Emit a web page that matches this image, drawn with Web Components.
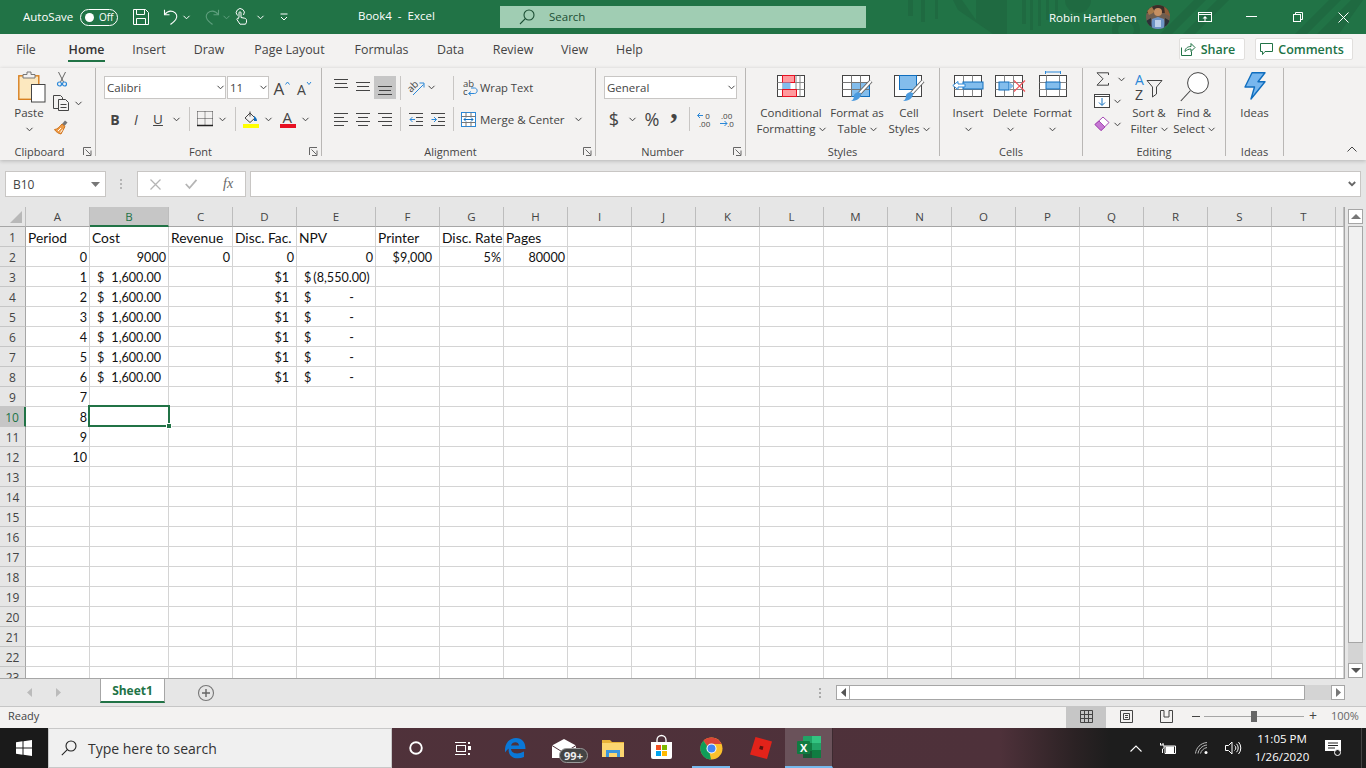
<!DOCTYPE html>
<html lang="en"><head><meta charset="utf-8"><title>Book4 - Excel</title>
<style>
html,body{margin:0;padding:0;width:1366px;height:768px;overflow:hidden;background:#e6e6e6}
body{font-family:"Open Sans","Liberation Sans",sans-serif;font-size:12px;color:#444;display:flex;flex-direction:column}
</style></head><body>
<xl-titlebar></xl-titlebar>
<xl-tabs></xl-tabs>
<xl-ribbon></xl-ribbon>
<xl-formula></xl-formula>
<xl-sheet></xl-sheet>
<xl-sheetbar></xl-sheetbar>
<xl-status></xl-status>
<xl-taskbar></xl-taskbar>
<script>
const TF='font-family="Open Sans" fill="#444"';
const stack=(txt,size,lh,left=0,w=18,h=18,extra='')=>`<foreignObject x="${left}" y="0" width="${w}" height="${h}"><div xmlns="http://www.w3.org/1999/xhtml" class="st" style="font:${size}px/${lh}px 'Open Sans',sans-serif;color:#444;white-space:pre;${extra}">${txt}</div></foreignObject>`;
const BRUSH=`<path d="M29 6L16 20" stroke="#666" stroke-width="4"/><path d="M29 6L16 20" stroke="#fff" stroke-width="2"/><path d="M12 20c2-3 4-3.500 7-2 .5 4-3.500 8.500-10 8 2-1 3-2.500 3-6z" fill="#4a9ade"/>`;
const ICONS={
save:[16,16,`<g fill="none" stroke="#fff"><path d="M.5.5h12l3 3v12H.5z"/><path d="M3.5.5v5h8v-5"/><path d="M3.5 15.5v-6h9v6"/></g>`],
undo:[16,16,`<g fill="none" stroke="#fff" stroke-width="1.1"><path d="M1.5.8v5h5"/><path d="M1.8 5.5C4 2.5 7 1.5 10 2.5c3.5 1.2 5 5 2.8 8-1 1.5-3.5 3.5-5.3 5"/></g>`],
redo:[16,16,`<g fill="none" stroke="#5f9f7e" stroke-width="1.1"><path d="M14.5.8v5h-5"/><path d="M14.2 5.5C12 2.5 9 1.5 6 2.5c-3.5 1.2-5 5-2.8 8 1 1.5 3.5 3.5 5.3 5"/></g>`],
touch:[12,16,`<g fill="none" stroke="#fff"><path d="M2.5 6.5A4 4 0 1 1 8.5 6"/><path d="M4 8V3.8a1 1 0 0 1 2 0V8.5l3.5.7c1.5.3 2 1 2 2v2l-1 2H5l-3-4.5c-.6-1 .6-1.800 1.300-1z" fill="#217346"/></g>`],
custom:[8,8,`<g fill="none" stroke="#fff"><path d="M.5 1h7"/><path d="M1 4l3 3 3-3"/></g>`],
chev:[7,5,`<path d="M.5.8L3.5 3.8 6.5.8" fill="none" stroke="#444"/>`],
chevw:[7,5,`<path d="M.5.8L3.5 3.8 6.5.8" fill="none" stroke="#fff"/>`],
chevd:[7,5,`<path d="M.5.8L3.5 3.8 6.5.8" fill="none" stroke="#5f9f7e"/>`],
chevb:[8,6,`<path d="M.8 1L4 4.2 7.2 1" fill="none" stroke="#666" stroke-width="1.800"/>`],
search:[16,16,`<g fill="none" stroke="#1c4f34" stroke-width="1.100"><circle cx="10" cy="6" r="5"/><path d="M6.300 9.700L1 15"/></g>`],
display:[14,10,`<g fill="none" stroke="#fff"><rect x=".5" y=".5" width="13" height="9"/><path d="M.5 2.500h13"/></g><path d="M7 4l2.500 2.500h-5zM6.500 6h1v3h-1z" fill="#fff"/>`],
min:[11,2,`<path d="M0 .5h11" stroke="#fff"/>`],
restore:[10,10,`<g fill="none" stroke="#fff"><rect x=".5" y="2.500" width="7" height="7"/><path d="M2.500 2.500v-2h7v7h-2"/></g>`],
close:[11,11,`<path d="M.5.5l10 10M10.500.5l-10 10" stroke="#fff" fill="none"/>`],
share:[15,14,`<g fill="none" stroke="#217346"><path d="M.5 5.500v8h10v-4"/><path d="M4 9.500C4 6.500 6.500 4.500 10 4.500V1.500l4 4-4 4V7C7.500 7 5.500 8 4 9.500z"/></g>`],
comment:[13,13,`<path d="M.5.5h12v8H5l-2.500 3v-3h-2z" fill="none" stroke="#217346"/>`],
paste:[28,32,`<rect x=".8" y="4.800" width="20" height="23.500" fill="#fce8bf" stroke="#d87f1f" stroke-width="1.400"/><path d="M5 7V3.500h4V1h4v2.500h4V7z" fill="#f3f2f1" stroke="#777"/><rect x="13.500" y="13.500" width="13.500" height="17.500" fill="#fff" stroke="#444"/>`],
scissors:[10,16,`<path d="M1.500 1l5 10M8.500 1l-5 10" stroke="#666" fill="none"/><circle cx="2.500" cy="13" r="2" fill="none" stroke="#2b88d8" stroke-width="1.200"/><circle cx="7.500" cy="13" r="2" fill="none" stroke="#2b88d8" stroke-width="1.200"/>`],
copy:[17,16,`<g fill="#f3f2f1" stroke="#444"><path d="M.5.5h7l2 2v11H.5z"/><path d="M5.500 4.500h7l3 3v8h-10z"/></g><path d="M7.500 9.500h6M7.500 12.500h6" stroke="#444"/>`],
brush:[16,16,`<path d="M9 5l3-3.500 2.500 2L11.500 7z" fill="#777"/><path d="M9 5l3 2.500L8 15c-2.500-.5-5-2-6.500-4.500C4 10.500 6 8.500 9 5z" fill="#ed9c4a" stroke="#d0741c"/><path d="M5 12l3-3M7.500 13.500l2-3" stroke="#fff"/>`],
agrow:[16,14,`<text x="-.5" y="13.500" font-size="17" ${TF}>A</text><path d="M11.500 3.500L13.500 1l2 2.500" fill="none" stroke="#2b88d8"/>`],
ashrink:[15,14,`<text x="0" y="13.500" font-size="14" ${TF}>A</text><path d="M10 1l2 2.500L14 1" fill="none" stroke="#2b88d8"/>`],
borders:[16,16,`<g stroke="#444" stroke-dasharray="1 1" fill="none"><path d="M.5.5h15M.5 7.500h15M.5.5v13M8 .5v13M15.500.5v13"/></g><path d="M0 14.500h16" stroke="#222" stroke-width="1.500"/>`],
fill:[16,17,`<path d="M2 7l5-5 5 5-5 4.500z" fill="none" stroke="#444"/><path d="M7 .5v5" stroke="#444"/><path d="M11 5c2 1 3 3 3 5h-3z" fill="#106ebe"/><rect y="13" width="16" height="4" fill="#ffff00"/>`],
fcolor:[16,17,`<text x="2.500" y="11.500" font-size="15" ${TF}>A</text><rect y="13" width="16" height="4" fill="#e81123"/>`],
a3:[14,9,`<path d="M0 .5h14M1 4.500h12M0 8.500h14" stroke="#444" fill="none"/>`],
orient:[17,16,`<text x="0" y="10" font-size="10" ${TF} transform="rotate(-45 5 8)">ab</text><path d="M5 15L15.500 4.500M11.500 3h4.500v4.500" stroke="#2b88d8" fill="none"/>`],
al:[14,13,`<path d="M0 .5h14M0 4.500h10M0 8.500h14M0 12.500h10" stroke="#444"/>`],
ac:[14,13,`<path d="M0 .5h14M2 4.500h10M0 8.500h14M2 12.500h10" stroke="#444"/>`],
ar:[14,13,`<path d="M0 .5h14M4 4.500h10M0 8.500h14M4 12.500h10" stroke="#444"/>`],
indl:[14,13,`<path d="M0 .5h14M7 4.500h7M7 8.500h7M0 12.500h14" stroke="#444"/><path d="M6 6.500H1M3.500 4L1 6.500 3.500 9" stroke="#2b88d8" fill="none"/>`],
indr:[14,13,`<path d="M0 .5h14M7 4.500h7M7 8.500h7M0 12.500h14" stroke="#444"/><path d="M.5 6.500h5M3 4l2.500 2.500L3 9" stroke="#2b88d8" fill="none"/>`],
wrap:[15,16,`${stack('ab\nc',9.5,8)}<path d="M6 13.500h5.500c3.500 0 3.500-5.500 0-5.500H8M8 11.500l-2.500 2L8 15.500" stroke="#2b88d8" fill="none"/>`],
merge:[15,15,`<rect x=".5" y=".5" width="14" height="14" fill="#fff" stroke="#2b88d8"/><path d="M.5 4.500h14M.5 10.500h14M5 .5v4M10 .5v4M5 10.500v4M10 10.500v4" stroke="#777"/><path d="M3 7.500h9M5 5.500l-2 2 2 2M10 5.500l2 2-2 2" stroke="#106ebe" fill="none"/>`],
incd:[16,15,`${stack('   0\n.00',8,7.5,2)}<path d="M6 3.500H.8M3 1L.5 3.500 3 6" stroke="#2b88d8" fill="none"/>`],
decd:[16,15,`${stack('.00\n   .0',8,7.5,2)}<path d="M1 11.500h7M5.500 9L8 11.500 5.500 14" stroke="#2b88d8" fill="none"/>`],
cf:[28,22,`<rect x=".5" y=".5" width="27" height="21" fill="#fff" stroke="#444"/><path d="M.5 7.500h27M.5 14.500h27M6 .5v21M19 .5v21M23 .5v21" stroke="#888"/><rect x="5.500" y=".5" width="12" height="7" fill="#ff9a9e" stroke="#e81123"/><rect x="5.500" y="7.500" width="8" height="7" fill="#83bdec"/><rect x="5.500" y="14.500" width="14" height="7" fill="#ff9a9e" stroke="#e81123"/>`],
ft:[30,27,`<rect x=".5" y=".5" width="27" height="21" fill="#fff" stroke="#444"/><rect x="9.500" y="7.500" width="18" height="14" fill="#83bdec" stroke="#106ebe"/><path d="M.5 7.500h27M.5 14.500h27M9.500.5v21M18.500.5v21" stroke="#777" fill="none"/>${BRUSH}`],
cs:[30,27,`<rect x=".5" y=".5" width="27" height="21" fill="#fff" stroke="#444"/><rect x="5.500" y=".5" width="17" height="14" fill="#83bdec" stroke="#106ebe"/>${BRUSH}`],
ins:[32,22,`<rect x="2.500" y=".5" width="27" height="21" fill="#fff" stroke="#444"/><path d="M11.500.5v21M20.500.5v21M2.500 14.500h27" stroke="#888"/><rect x="11" y="7" width="20" height="7" fill="#83bdec" stroke="#106ebe"/><path d="M13 9H6V6.500L.8 10.500 6 14.500V12h7z" fill="#fff" stroke="#2b88d8"/>`],
del:[31,22,`<rect x=".5" y=".5" width="27" height="21" fill="#fff" stroke="#444"/><path d="M9.500.5v21M18.500.5v21M.5 7.500h27M.5 14.500h27" stroke="#888"/><rect x="4" y="7" width="10" height="8" fill="#83bdec" stroke="#106ebe"/><path d="M14 7l5 4-5 4z" fill="#83bdec"/><path d="M19 5.500l11 11M30 5.500l-11 11" stroke="#f1515a" stroke-width="1.200"/>`],
fmt:[28,26,`<path d="M6.500 1h15M6.500 0v3M21.500 0v3" stroke="#2b88d8" fill="none"/><rect x=".5" y="4.500" width="27" height="21" fill="#fff" stroke="#444"/><path d="M.5 11.500h27M.5 18.500h27M7.500 4.500v21M20.500 4.500v21" stroke="#888"/><rect x="7" y="11" width="14" height="7" fill="#83bdec" stroke="#106ebe"/>`],
sigma:[13,14,`<path d="M12.500 3V.8H1l6 6-6 6.400h11.500V11" fill="none" stroke="#444"/>`],
filld:[16,14,`<rect x=".5" y=".5" width="15" height="13" fill="#fff" stroke="#444"/><path d="M.5 2.500h15" stroke="#444"/><path d="M8 4v7M5 8.500L8 11.500 11 8.500" fill="none" stroke="#106ebe"/>`],
eraser:[16,16,`<path d="M1 8.500L9 1l6 5.500-8 8z" fill="#fff" stroke="#a64ab5"/><path d="M1 8.500L5 5l6 6-4 3.500z" fill="#c678d3" stroke="#a64ab5"/>`],
sortf:[28,30,`<style>.az::first-line{color:#2b88d8}</style>${stack('A\nZ',14,15,0,13,30).replace('class="st"','class="az"')}<path d="M12 8.500h15l-5.500 6.500v7l-4 3v-10z" fill="none" stroke="#444"/>`],
find:[29,30,`<circle cx="18" cy="11" r="10.400" fill="#fff" stroke="#444"/><path d="M10.500 18.500L.8 29" stroke="#444" stroke-width="1.100"/>`],
bolt:[22,28,`<path d="M8 .8h13l-7 9h7L7 27l3.500-12H1z" fill="#78b7ee" stroke="#106ebe" stroke-width="1.400" stroke-linejoin="round"/>`],
launch:[9,9,`<path d="M.5 8V.5H8" fill="none" stroke="#666"/><path d="M2.500 2.500L7.500 7.500M8 3.500v5h-5" fill="none" stroke="#666"/>`],
collapse:[10,6,`<path d="M.5 5.500L5 1l4.500 4.500" fill="none" stroke="#444"/>`],
xg:[11,11,`<path d="M.5.5l10 10M10.500.5l-10 10" stroke="#b5b5b5" stroke-width="1.300" fill="none"/>`],
okg:[12,10,`<path d="M.8 5l3.700 4L11.500.8" stroke="#b5b5b5" stroke-width="1.800" fill="none"/>`],
tri:[9,5,`<path d="M0 0h9L4.500 5z" fill="#777"/>`],
triu:[10,5,`<path d="M0 5h10L5 0z" fill="#777"/>`],
trid:[10,5,`<path d="M0 0h10L5 5z" fill="#555"/>`],
tril:[5,9,`<path d="M5 0v9L0 4.500z" fill="#555"/>`],
trir:[5,9,`<path d="M0 0v9l5-4.500z" fill="#777"/>`],
triln:[5,9,`<path d="M5 0v9L0 4.500z" fill="#bbb"/>`],
trirn:[5,9,`<path d="M0 0v9l5-4.500z" fill="#bbb"/>`],
plus:[18,18,`<circle cx="9" cy="9" r="7.500" fill="none" stroke="#777" stroke-width="1.100"/><path d="M9 5v8M5 9h8" stroke="#666" stroke-width="1.400"/>`],
grid:[13,13,`<path d="M.5.500h12v12H.5zM4.500.500v12M8.500.500v12M.5 4.500h12M.5 8.500h12" fill="none" stroke="#444"/>`],
page:[13,13,`<path d="M.5.500h12v12H.5zM3.500 3.500h6v6h-6zM5 5.500h3M5 7.500h3" fill="none" stroke="#444"/>`],
brk:[13,13,`<path d="M.5.500h3.500v6.500h5v-6.500h3.500v12H.5z" fill="none" stroke="#444"/>`],
winlogo:[16,16,`<path d="M0 2.300L6.500 1.300V7.500H0zM7.500 1.200L16 0V7.500H7.500zM0 8.500h6.500v6.200L0 13.700zM7.500 8.500H16V16l-8.500-1.200z" fill="#fff"/>`],
tsearch:[16,16,`<g fill="none" stroke="#222" stroke-width="1.100"><circle cx="10" cy="6" r="5"/><path d="M6.300 9.700L.8 15.200"/></g>`],
cortana:[14,14,`<circle cx="7" cy="7" r="5.800" fill="none" stroke="#fff" stroke-width="1.900"/>`],
taskview:[16,13,`<g fill="none" stroke="#fff"><path d="M0 .5h11M0 12.500h11"/><rect x="1.500" y="3.500" width="9" height="6"/></g><rect x="13" y="0" width="2" height="2" fill="#fff"/><rect x="13" y="4" width="3" height="4" fill="#fff"/><rect x="13" y="11" width="2" height="2" fill="#fff"/>`],
edge:[22,22,`<path d="M1 12C1.500 5 6.500 1 12 1c6 0 9.500 4 9.500 11H7c.3 4.500 6.500 6 13 2.500v5.500C12 23.500 3.500 20 4.800 11.500 3 13 2 14 1 15.500zM7 8.500h8c0-4.500-7-4.500-8 0z" fill="#0a78d7" fill-rule="evenodd"/>`],
mail:[24,19,`<path d="M0 6.500L12 0l12 6.500V19H0z" fill="#fff"/><path d="M0 6.500L12 14l12-7.500" fill="none" stroke="#50323a"/>`],
explorer:[22,18,`<path d="M0 1h8l2 2h12v15H0z" fill="#e8b339"/><rect x="0" y="4" width="22" height="14" fill="#fbd670"/><path d="M4 18v-7h14v7h-3v-4H7v4z" fill="#3a96dd"/>`],
store:[23,23,`<path d="M7 6V4a4.500 4.500 0 0 1 9 0v2" fill="none" stroke="#fff" stroke-width="1.300"/><path d="M1 6h21v15a2 2 0 0 1-2 2H3a2 2 0 0 1-2-2z" fill="#fff"/><rect x="6" y="9" width="5" height="5" fill="#f25022"/><rect x="12" y="9" width="5" height="5" fill="#7fba00"/><rect x="6" y="15" width="5" height="5" fill="#00a4ef"/><rect x="12" y="15" width="5" height="5" fill="#ffb900"/>`],
chrome:[23,23,`<circle cx="11.500" cy="11.500" r="11" fill="#fbc02d"/><path d="M11.500.5A11 11 0 0 1 21.500 7H11.500A4.500 4.500 0 0 0 7.500 9.500L3.500 3.700A11 11 0 0 1 11.500.5z" fill="#db4437"/><path d="M3.500 3.700L7.500 9.500A4.500 4.500 0 0 0 9.500 15.500L11 22.500A11 11 0 0 1 3.500 3.700z" fill="#0f9d58"/><circle cx="11.500" cy="11.500" r="5" fill="#fff"/><circle cx="11.500" cy="11.500" r="4" fill="#4285f4"/>`],
roblox:[22,22,`<path d="M5.500 0L22 4.500 17 22 0 17.500z" fill="#e2231a"/><rect x="9.500" y="9" width="3.500" height="3.500" fill="#5b1410" transform="rotate(15 11 11)"/>`],
excel:[24,22,`<rect x="6" y="0" width="18" height="22" rx="1" fill="#21a366"/><rect x="15" y="0" width="9" height="7" fill="#33c481"/><rect x="6" y="7" width="9" height="8" fill="#107c41"/><rect x="15" y="14" width="9" height="8" fill="#107c41"/><rect x="6" y="15" width="9" height="7" fill="#185c37"/><rect x="0" y="5" width="13" height="13" rx="1" fill="#107c41"/><text x="3" y="15.500" font-size="11" font-weight="700" font-family="Open Sans" fill="#fff">X</text>`],
caret:[12,7,`<path d="M.5 6.500L6 1l5.500 5.500" fill="none" stroke="#fff" stroke-width="1.100"/>`],
power:[16,11,`<path d="M5 3h10.500v7.500H5z" fill="none" stroke="#fff"/><rect x="6" y="3.500" width="8" height="6.500" fill="#fff"/><path d="M.5 0v2M3 0v2M0 2h4v2.500a2 2 0 0 1-1.500 1.500v4" fill="none" stroke="#fff"/>`],
wifi:[13,12,`<g fill="none" stroke="#bbb"><path d="M.5 11.500C1 6 5.500 1 12 .5"/><path d="M3 11.500C3.500 7.500 7 3.500 12 3"/><path d="M5.500 11.500C6 9 8.500 6 12 5.500"/></g><circle cx="11" cy="10.500" r="1.500" fill="#fff"/>`],
speaker:[16,14,`<g fill="none" stroke="#fff"><path d="M.5 4.500h3L7 1v12L3.500 9.500h-3z"/><path d="M9.500 4.500a3 3 0 0 1 0 5"/><path d="M11.500 2.800a6 6 0 0 1 0 8.400"/><path d="M13.500 1a9 9 0 0 1 0 12"/></g>`],
notif:[16,16,`<path d="M0 0h16v11h-3l-3 4v-4H0z" fill="#fff"/><path d="M3 3h10M3 5.500h10M3 8h7" stroke="#222"/><circle cx="12.500" cy="12.500" r="3" fill="#222" stroke="#fff"/>`],
avatar:[24,24,`<defs><clipPath id="c"><circle cx="12" cy="12" r="12"/></clipPath></defs><g clip-path="url(#c)"><rect width="24" height="24" fill="#6e5d4f"/><rect width="24" height="8" fill="#3a2e28"/><path d="M0 4l6-2 3 5-6 3z" fill="#a6794a"/><path d="M18 1l6 3v7l-5-2z" fill="#8e5d3a"/><circle cx="12" cy="7" r="4" fill="#c58f62"/><path d="M4 24l2-10 6-2 6 2 2 10z" fill="#6d93c5"/><path d="M9 15h6v7H9z" fill="#bcd0ea"/><path d="M0 16l5-3 1 11H0zM24 16l-5-3-1 11h6z" fill="#2b3038"/></g>`]
};
customElements.define('x-ico',class extends HTMLElement{
 connectedCallback(){
  if(this.shadowRoot)return;
  const [w,h,b]=ICONS[this.getAttribute('n')];
  const s=this.attachShadow({mode:'open'});
  s.innerHTML=`<style>:host{display:inline-flex;flex:none;line-height:0}svg{display:block;overflow:visible}</style><svg width="${w}" height="${h}" viewBox="0 0 ${w} ${h}">${b}</svg>`;
 }
});
function def(name,css,html,init){
 customElements.define(name,class extends HTMLElement{
  connectedCallback(){
   if(this.shadowRoot)return;
   const s=this.attachShadow({mode:'open'});
   s.innerHTML=`<style>${css}</style>${typeof html==='function'?html(this):html}`;
   if(init)init(s,this);
  }
 });
}
const ic=(n,ml=0,extra='')=>`<x-ico n="${n}" style="margin-left:${ml}px;${extra}"></x-ico>`;
const ui='"Open Sans","Liberation Sans",sans-serif';

def('xl-titlebar',`
:host{display:flex;align-items:center;height:34px;background:#217346;color:#fff;font:11.5px ${ui};position:relative;flex:none;overflow:hidden}
.deco{position:absolute;left:905px;top:0}
.a{margin-left:23px;width:50px;white-space:nowrap;margin-bottom:1px}
.tog{margin-left:7px;width:36px;height:15px;border:1px solid #fff;border-radius:9px;display:flex;align-items:center;font-size:10px}
.tog i{width:9px;height:9px;border-radius:50%;background:#fff;margin:0 5px 0 4px}
.title{margin-left:70px;width:142px;white-space:pre;margin-bottom:3px}
.sb{width:366px;height:22px;background:#a0cdb3;display:flex;align-items:center;color:#1c4f34;padding-bottom:1px;box-sizing:border-box}
.sb x-ico{margin-left:19px;margin-right:14px}
.name{margin-left:183px;width:97px;white-space:nowrap;position:relative}
x-ico{position:relative}`,
`<svg class="deco" width="461" height="34"><g fill="#1f6a41"><rect x="3" width="5" height="16"/><rect x="16" width="4" height="22"/><rect x="30" width="3" height="19"/><path d="M48 0h9l14 20V0h31v34H88L53 10z"/><rect x="117" width="4" height="24"/><rect x="125" width="3" height="30"/><rect x="133" width="3" height="26"/><rect x="141" width="3" height="20"/><rect x="150" width="3" height="15"/><circle cx="173" cy="0" r="13"/><path d="M255 34L289 0h12l-34 34zM278 34l34-34h12l-34 34zM390 34L424 0h12l-34 34zM412 34l34-34h12l-24 34z"/><circle cx="221" cy="30" r="11" fill="none" stroke="#1f6a41" stroke-width="6"/></g></svg>
<div class="a">AutoSave</div><div class="tog"><i></i>Off</div>
${ic('save',15)}${ic('undo',14)}${ic('chevw',4)}${ic('redo',14)}${ic('chevd',3)}${ic('touch',5)}${ic('chevw',10)}${ic('custom',16)}
<div class="title">Book4  -  Excel</div>
<div class="sb"><x-ico n="search"></x-ico>Search</div>
<div class="name">Robin Hartleben</div>
${ic('avatar',0)}${ic('display',28)}${ic('min',34)}${ic('restore',36)}${ic('close',35)}`);

const TABS=[['File',17,18],['Home',33,37],['Insert',28,32],['Draw',29,30],['Page Layout',30,71],['Formulas',30,53],['Data',29,27],['Review',29,40],['View',28,27],['Help',28,27]];
def('xl-tabs',`
:host{display:flex;align-items:center;height:34px;background:#f3f2f1;flex:none;font:12.4px ${ui};color:#444}
.t{text-align:center;white-space:nowrap;height:34px;line-height:31px;display:flex;justify-content:center;box-sizing:border-box}
.on{color:#333;font-weight:600;border-bottom:2px solid #217346;height:28px;align-self:flex-start}
.b{height:22px;background:#fff;border:1px solid #e1dfdd;border-radius:2px;box-sizing:border-box;display:flex;align-items:center;color:#217346;font-weight:600;font-size:12.5px;justify-content:center;gap:5px;align-self:flex-start;margin-top:4px;padding-right:4px}`,
`${TABS.map(([t,m,w],i)=>`<div class="t ${i==1?'on':''}" style="margin-left:${m}px;width:${w}px">${t}</div>`).join('')}
<div style="flex:1"></div>
<div class="b" style="width:66px;padding-right:8px">${ic('share')}Share</div>
<div class="b" style="width:98px;margin-left:10px;margin-right:13px">${ic('comment')}Comments</div>`);

def('xl-group',`
:host{display:flex;flex-direction:column;box-sizing:border-box;border-right:1px solid #b9b7b5;height:88px;flex:none;font:12px ${ui};color:#444}
.c{flex:1;min-height:0}
.f{height:10px;line-height:12px;display:grid;grid-template-columns:1fr auto 1fr;font-size:11px;color:#444}
.f.l{grid-template-columns:1fr auto 1fr 16px}
.f span{white-space:nowrap}
.f x-ico{justify-self:end;margin:1px 3px 0 0}`,
h=>{const l=h.hasAttribute('launch');return `<div class="c"><slot></slot></div><div class="f ${l?'l':''}"><span></span><span>${h.getAttribute('label')}</span><span></span>${l?'<x-ico n="launch"></x-ico>':''}</div>`},
(s,h)=>{h.style.width=h.getAttribute('w')+'px'});

def('xl-big',`
:host{display:flex;flex-direction:column;align-items:center;flex:none;font:11.5px/16px ${ui};color:#444;white-space:nowrap}
.i{height:37px;display:flex;justify-content:center;align-items:flex-start}
::slotted(span){display:flex;align-items:center;height:16px;gap:3px}`,
h=>`<div class="i"><slot name="icon"></slot></div><slot></slot>`,
(s,h)=>{h.style.width=h.getAttribute('w')+'px'});

def('xl-select',`
:host{display:flex;align-items:center;height:23px;background:#fff;border:1px solid #c8c6c4;box-sizing:border-box;font:11.5px ${ui};color:#444;flex:none;padding:0 1px 0 2px;justify-content:space-between}`,
h=>`<slot></slot><x-ico n="chev"></x-ico>`,(s,h)=>{h.style.width=h.getAttribute('w')+'px';h.style.marginLeft=(h.getAttribute('ml')||0)+'px'});

const big=(w,icon,mt,lines,ml=0)=>`<xl-big w="${w}"><x-ico slot="icon" n="${icon}" style="margin-top:${mt}px;margin-left:${ml}px"></x-ico>${lines.map(l=>`<span>${l}</span>`).join('')}</xl-big>`;
const chev=`<x-ico n="chev"></x-ico>`;
const sep=(ml,h=24)=>`<i class="s" style="margin-left:${ml}px;height:${h}px"></i>`;
def('xl-ribbon',`
:host{display:flex;height:92px;background:#f3f2f1;flex:none;box-shadow:0 1px 4px rgba(0,0,0,.22);position:relative;z-index:1;font:12px ${ui};color:#444}
.r{display:flex;align-items:center;height:23px;white-space:nowrap;font-size:11.5px}
.r1{margin-top:8px}.r2{margin-top:8px;height:24px}
.s{display:block;width:1px;background:#c8c6c4;flex:none}
.row{display:flex}
.g{display:flex;flex:none;justify-content:center;align-items:center}
.col{display:flex;flex-direction:column}
.cur{background:#c6c6c6;width:22px;height:23px;margin-left:4px;display:flex;justify-content:center;align-items:center}
.cnt{flex:1;display:flex;justify-content:flex-end;align-items:flex-end;padding:0 9px 4px 0;height:88px;box-sizing:border-box}`,
`<xl-group w="96" label="Clipboard" launch><div class="row">
 <div style="margin-left:9px">${big(40,'paste',3,['Paste',chev],6)}</div>
 <div class="col" style="margin-left:4px">
  ${ic('scissors',4,'margin-top:3px')}
  <div class="r" style="height:16px;margin-top:8px">${ic('copy')}${ic('chev',5)}</div>
  ${ic('brush',0,'margin-top:8px')}
 </div></div></xl-group>
<xl-group w="226" label="Font" launch>
 <div class="r r1"><xl-select w="122" ml="8">Calibri</xl-select><xl-select w="42" ml="1">11</xl-select>${ic('agrow',5)}${ic('ashrink',7)}</div>
 <div class="r r2">
  <span class="g" style="width:12px;margin-left:13px;font-weight:700;font-size:14px">B</span>
  <span class="g" style="width:12px;margin-left:9px;font-style:italic;font-size:14px">I</span>
  <span class="g" style="width:12px;margin-left:10px;text-decoration:underline;font-size:13.5px">U</span>
  ${ic('chev',9)}${sep(9)}${ic('borders',7)}${ic('chev',6)}${sep(9)}${ic('fill',7)}${ic('chev',6)}${ic('fcolor',8)}${ic('chev',6)}
 </div></xl-group>
<xl-group w="274" label="Alignment" launch>
 <div class="r r1">${ic('a3',12,'margin-top:-8px')}${ic('a3',8,'margin-top:-2px')}<div class="cur">${ic('a3',0,'margin-top:6px')}</div>${sep(4)}${ic('orient',7)}${ic('chev',3)}${sep(18)}${ic('wrap',9)}<span style="margin-left:2px;font-size:11.2px">Wrap Text</span></div>
 <div class="r r2">${ic('al',12)}${ic('ac',8)}${ic('ar',8)}${sep(8)}${ic('indl',8)}${ic('indr',8)}${sep(8)}${ic('merge',7)}<span style="margin-left:4px;width:85px">Merge &amp; Center</span>${ic('chev',10)}</div>
</xl-group>
<xl-group w="150" label="Number" launch>
 <div class="r r1"><xl-select w="133" ml="8">General</xl-select></div>
 <div class="r r2"><span class="g" style="width:12px;margin-left:12px;font-size:18px">$</span>${ic('chev',9)}<span class="g" style="width:20px;margin-left:6px;font-size:18px">%</span><span class="g" style="width:12px;margin-left:6px;font:700 30px/24px 'Liberation Serif',serif;height:24px;margin-top:-22px">,</span>${sep(9)}${ic('incd',7)}${ic('decd',6)}</div>
</xl-group>
<xl-group w="194" label="Styles"><div class="row" style="padding-left:12px">
 ${big(66,'cf',7,['Conditional','Formatting '+chev])}${big(66,'ft',7,['Format as','Table '+chev])}${big(38,'cs',7,['Cell','Styles '+chev])}
</div></xl-group>
<xl-group w="143" label="Cells"><div class="row" style="padding-left:7px">
 ${big(42,'ins',7,['Insert',chev])}${big(42,'del',7,['Delete',chev])}${big(43,'fmt',3,['Format',chev])}
</div></xl-group>
<xl-group w="143" label="Editing"><div class="row" style="padding-left:11px">
 <div class="col" style="width:33px;flex:none">
  <div class="r" style="height:14px;margin-top:4px">${ic('sigma',2)}${ic('chev',9)}</div>
  <div class="r" style="height:14px;margin-top:8px">${ic('filld')}${ic('chev',4)}</div>
  <div class="r" style="height:16px;margin-top:8px">${ic('eraser')}${ic('chev',4)}</div>
 </div>
 ${big(44,'sortf',4,['Sort &amp;','Filter '+chev])}${big(46,'find',4,['Find &amp;','Select '+chev])}
</div></xl-group>
<xl-group w="58" label="Ideas"><div class="row">${big(57,'bolt',4,['Ideas'])}</div></xl-group>
<div class="cnt">${ic('collapse')}</div>`);

def('xl-formula',`
:host{display:flex;height:47px;padding-top:11px;box-sizing:border-box;background:#e6e6e6;flex:none;font:12px ${ui};color:#444}
.bx{background:#fff;border:1px solid #c8c6c4;box-sizing:border-box;height:26px;display:flex;align-items:center;flex:none}
.dots{display:flex;flex-direction:column;gap:2px;margin:8px 15px 0 14px;align-self:flex-start}
.dots i{display:block;width:2px;height:2px;background:#b5b5b5}
.fx{font:italic 14px "Liberation Serif",serif;color:#666;margin-left:26px}`,
`<div class="bx" style="width:101px;margin-left:5px;padding:0 5px 0 7px;justify-content:space-between">B10${ic('tri')}</div>
<div class="dots"><i></i><i></i><i></i></div>
<div class="bx" style="width:109px">${ic('xg',12)}${ic('okg',24)}<span class="fx">fx</span></div>
<div class="bx" style="width:1111px;margin-left:4px;justify-content:flex-end;padding-right:4px">${ic('chevb')}</div>`);

const COLS='ABCDEFGHIJKLMNOPQRST'.split('');
const ac=v=>`<span class="acc"><span>$</span><span>${v}</span></span>`;
const DATA={
1:['Period','Cost','Revenue','Disc. Fac.','NPV','Printer','Disc. Rate','Pages'],
2:[0,9000,0,0,0,'$9,000','5%',80000]};
def('xl-sheet',`
:host{display:flex;height:472px;flex:none;background:#e6e6e6}
.w{width:1345px;height:472px;box-sizing:border-box;overflow:hidden;border-right:1px solid #a6a6a6;border-bottom:1px solid #a6a6a6;flex:none}
.g{display:grid;grid-template-columns:26px 64px 79px 64px 64px 79px repeat(15,64px) 8px;grid-auto-rows:20px}
.h{background:#e6e6e6;box-sizing:border-box;display:flex;align-items:center;justify-content:center;font:11.5px ${ui};color:#444}
.ch{border-bottom:1px solid #a6a6a6;border-right:1px solid #bdbdbd}
.rh{border-right:1px solid #a6a6a6;border-bottom:1px solid #c6c6c6;font-size:12px;padding-top:1px}
.corner{border-right:1px solid #bdbdbd;border-bottom:1px solid #a6a6a6;align-items:flex-end;justify-content:flex-end;padding:0 3px 3px 0}
.corner i{display:block;width:0;height:0;border-left:12px solid transparent;border-bottom:12px solid #b8b8b8}
.sel{background:#c6c6c6;color:#217346}
.ch.sel{border-bottom:2px solid #217346}
.rh.sel{border-right:2px solid #217346}
.c{background:#fff;box-sizing:border-box;border-right:1px solid #d4d4d4;border-bottom:1px solid #d4d4d4;font:13.8px/19px Lato,"Liberation Sans",sans-serif;color:#111;padding:1px 2px 0;white-space:nowrap;display:flex;align-items:center}
.n{justify-content:flex-end;font-size:12.6px}
.m{padding-right:7px}
.acc{flex:1;display:flex;justify-content:space-between;padding:0 5px 0 5px;font-size:12.6px}
.dash{padding:0 19px 0 5px}
.e1{padding:0 1px 0 5px;justify-content:flex-start;gap:2px}
.cur{position:relative;z-index:2}
.cur::after{content:"";position:absolute;left:-2px;top:-2px;right:-2px;bottom:-1px;border:2px solid #217346;pointer-events:none}
.cur::before{content:"";position:absolute;right:-4px;bottom:-3px;background:#217346;border:1px solid #fff;z-index:1;box-sizing:border-box;width:6px;height:6px}
.vs{flex:1;display:flex;flex-direction:column;padding:2px 3px 0 3px;box-sizing:border-box;height:471px}
.btn{height:15px;border:1px solid #a6a6a6;background:#fff;box-sizing:border-box;display:flex;align-items:center;justify-content:center;flex:none}
.th{height:417px;background:#f1f1f1;border:1px solid #a6a6a6;box-sizing:border-box;flex:none;margin-top:2px}
.tr{flex:1;background:#d4d4d4}`,
`<div class="w"><div class="g" id="g"></div></div>
<div class="vs"><div class="btn">${ic('triu')}</div><div class="th"></div><div class="tr"></div><div class="btn">${ic('trid')}</div></div>`,
s=>{
 let h=`<div class="h corner"><i></i></div>`;
 COLS.forEach(c=>h+=`<div class="h ch ${c=='B'?'sel':''}">${c}</div>`);
 h+=`<div class="h ch"></div>`;
 for(let r=1;r<=23;r++){
  h+=`<div class="h rh ${r==10?'sel':''}">${r}</div>`;
  for(let i=0;i<21;i++){
   let cls='c',t='';
   if(DATA[r]&&i<8){t=DATA[r][i];if(r==2)cls+=' n';if(r==2&&i==5)cls+=' m';}
   if(r>=3&&r<=12&&i==0){t=r-2;cls+=' n';}
   if(r>=3&&r<=8){
    if(i==1)t=ac('1,600.00');
    if(i==3){t='$1';cls+=' n m';}
    if(i==4)t=r==3?`<span class="acc e1"><span>$</span><span>(8,550.00)</span></span>`:`<span class="acc dash"><span>$</span><span>-</span></span>`;
   }
   if(r==10&&i==1)cls+=' cur';
   h+=`<div class="${cls}">${t}</div>`;
  }
 }
 s.getElementById('g').innerHTML=h;
});

def('xl-sheetbar',`
:host{display:flex;align-items:center;height:28px;background:#e6e6e6;border-bottom:1px solid #c6c6c6;box-sizing:border-box;flex:none;font:12px ${ui}}
.tab{width:65px;height:24px;align-self:flex-start;background:#fff;border:solid #a6a6a6;border-width:0 1px;border-bottom:2px solid #217346;box-sizing:border-box;display:flex;align-items:center;justify-content:center;color:#217346;font-weight:700;margin-left:39px}
.dots{display:flex;flex-direction:column;gap:2px;margin-left:604px}
.dots i{display:block;width:2px;height:2px;background:#aaa}
.btn{width:14px;height:15px;background:#fff;border:1px solid #a6a6a6;box-sizing:border-box;display:flex;align-items:center;justify-content:center;flex:none}
.tk{width:455px;height:15px;background:#fff;border:1px solid #a6a6a6;border-left:0;box-sizing:border-box;flex:none}
.tr{width:26px;height:15px;background:#d4d4d4;flex:none}`,
`${ic('triln',27)}${ic('trirn',24)}<div class="tab">Sheet1</div>${ic('plus',32)}
<div class="dots"><i></i><i></i><i></i></div>
<div class="btn" style="margin-left:15px">${ic('tril')}</div><div class="tk"></div><div class="tr"></div><div class="btn">${ic('trir')}</div>`);

def('xl-status',`
:host{display:flex;align-items:center;height:21px;background:#f3f2f1;flex:none;font:11px ${ui};color:#444}
.v{width:40px;height:21px;display:flex;align-items:center;justify-content:center;flex:none;box-sizing:border-box;padding-bottom:3px}
.on{background:#c6c6c6;margin-left:1018px}
.sl{width:100px;height:1px;background:#a6a6a6;margin-left:4px;display:flex;align-items:center;justify-content:center;flex:none}
.sl i{display:block;width:6px;height:11px;background:#666;flex:none}
.m{width:8px;height:1px;background:#444;flex:none;margin-left:6px}
.p{color:#444;font-size:14px;margin-left:3px;width:12px;text-align:center;line-height:14px}
.u{margin-bottom:3px}
.w{margin-bottom:5px}`,
`<span class="w" style="margin-left:8px;width:40px">Ready</span>
<div class="v on">${ic('grid')}</div><div class="v">${ic('page')}</div><div class="v">${ic('brk')}</div>
<div class="m u"></div><div class="sl u"><i></i></div><div class="p u">+</div>
<span class="w" style="margin-left:12px;color:#666">100%</span>`);

def('xl-taskbar',`
:host{display:flex;align-items:center;height:40px;flex:none;background:linear-gradient(90deg,#50323a 0,#4e313a 1000px,#2b2224 1075px,#1d1d1d 1110px);color:#fff;font:12px ${ui}}
.st{width:48px;height:40px;background:#1a1a1a;display:flex;align-items:center;justify-content:center;flex:none}
.s{width:344px;height:40px;background:#f0f0f0;border:1px solid #c8c8c8;box-sizing:border-box;display:flex;align-items:center;color:#333;font-size:14px;flex:none}
.a{height:40px;display:flex;align-items:center;justify-content:center;flex:none;box-sizing:border-box;position:relative}
.u{border-bottom:2px solid #76b9ed}
.x{background:#6a525a;border-right:1px solid #3d2a30}
.badge{position:absolute;left:15px;top:20px;width:29px;height:15px;border-radius:8px;background:#444;border:1px solid #999;box-sizing:border-box;display:flex;align-items:center;justify-content:center;font-size:11px;font-weight:700;color:#eee;line-height:1}
.t{width:60px;text-align:center;line-height:18px;font-size:11.5px;white-space:nowrap;flex:none;margin-left:11px}
.e{width:4px;height:40px;border-left:1px solid #444;margin-left:20px;flex:none}`,
`<div class="st">${ic('winlogo')}</div>
<div class="s">${ic('tsearch',12)}<span style="margin-left:11px">Type here to search</span></div>
<div class="a" style="width:48px">${ic('cortana')}</div>
<div class="a" style="width:46px">${ic('taskview')}</div>
<div class="a" style="width:58px">${ic('edge')}</div>
<div class="a" style="width:52px">${ic('mail',0,'margin-right:12px')}<span class="badge">99+</span></div>
<div class="a" style="width:34px">${ic('explorer',0,'margin-top:-1px')}</div>
<div class="a" style="width:62px">${ic('store',0,'margin-top:-1px')}</div>
<div class="a u" style="width:38px">${ic('chrome',0,'margin-top:2px')}</div>
<div class="a" style="width:55px;padding-left:7px">${ic('roblox')}</div>
<div class="a u x" style="width:48px">${ic('excel')}</div>
<div style="flex:1"></div>
${ic('caret')}${ic('power',18)}${ic('wifi',19)}${ic('speaker',17)}
<div class="t">11:05 PM<br>1/26/2020</div>
${ic('notif',13)}<div class="e"></div>`);
</script>
</body></html>
